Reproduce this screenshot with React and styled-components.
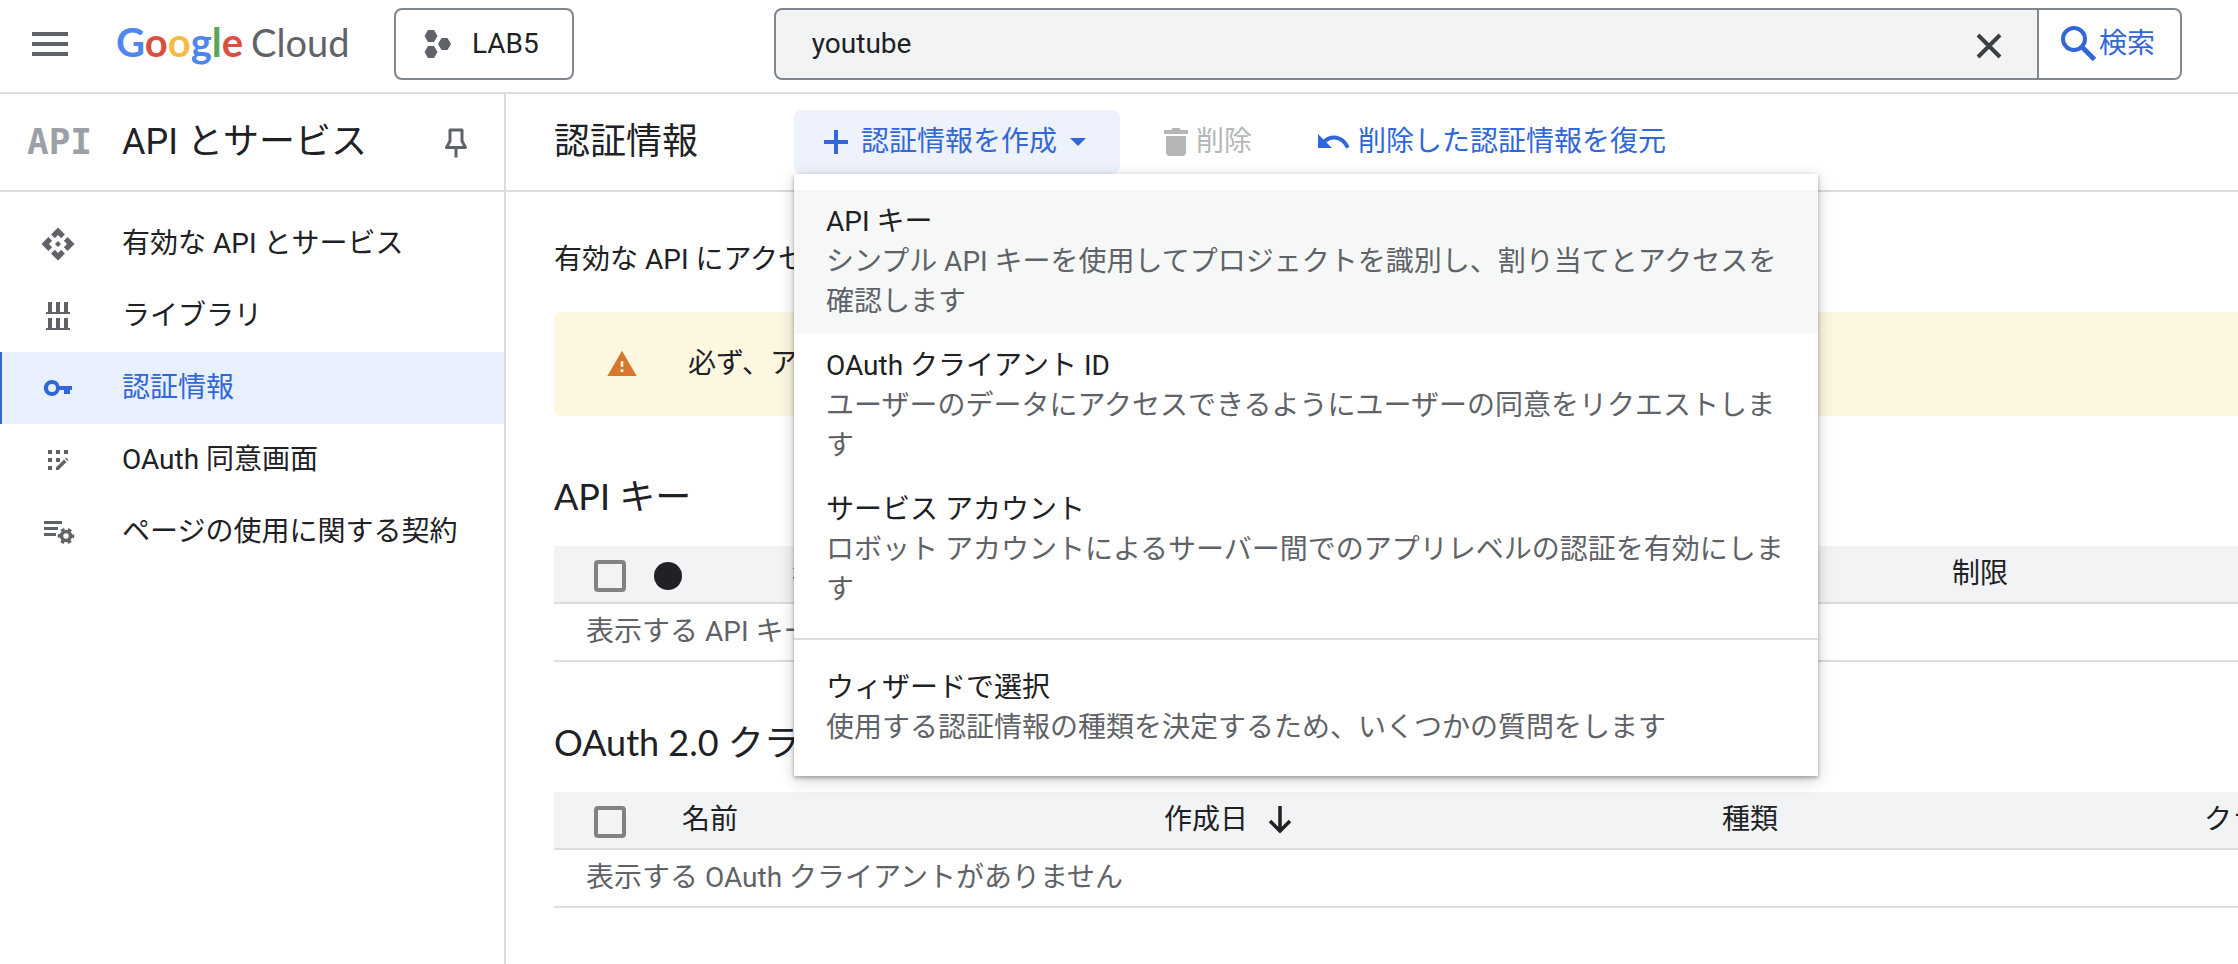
import React from "react";
import styled, { createGlobalStyle } from "styled-components";
import { MdApi, MdMenu, MdWarning } from "react-icons/md";

const GlobalStyles = createGlobalStyle`
  * {
    box-sizing: border-box;
  }
  body {
    margin: 0;
    background: #fff;
    color: #202124;
    font-family: Roboto, "Noto Sans CJK JP", sans-serif;
    font-size: 28px;
    line-height: 40px;
    overflow-x: hidden;
  }
  button,
  input {
    font: inherit;
    color: inherit;
    border: 0;
    margin: 0;
    padding: 0;
    background: none;
  }
  button {
    cursor: pointer;
  }
  svg {
    display: block;
    flex-shrink: 0;
  }
`;

const HeaderStyles = styled.header`
  display: flex;
  align-items: center;
  height: 94px;
  padding: 0 56px 4px 26px;
  border-bottom: 2px solid #dadce0;
`;

const MenuButton = styled.button`
  color: #5f6368;
`;

const Logo = styled.a`
  display: flex;
  align-items: baseline;
  column-gap: 8px;
  width: 278px;
  margin-left: 42px;
  padding-bottom: 4px;
  font-family: Lato, sans-serif;
  font-size: 38px;
  color: #5f6368;
  text-decoration: none;
  .logo-google {
    font-size: 40px;
    font-weight: 700;
  }
`;

const Letter = styled.span`
  color: ${(props) => props.$color};
`;

const ProjectButton = styled.button`
  display: flex;
  align-items: center;
  column-gap: 20px;
  height: 72px;
  padding: 0 33px 0 28px;
  border: 2px solid #80868b;
  border-radius: 8px;
`;

const SearchForm = styled.form`
  display: flex;
  flex: 1;
  height: 72px;
  margin-left: 200px;
  border: 2px solid #80868b;
  border-radius: 8px;
  background: #f1f3f4;
  overflow: hidden;
`;

const SearchInput = styled.input`
  flex: 1;
  min-width: 0;
  padding-left: 36px;
  outline: none;
`;

const ClearButton = styled.button`
  display: flex;
  align-items: center;
  justify-content: center;
  width: 96px;
  padding-top: 4px;
  color: #3c4043;
`;

const SearchButton = styled.button`
  display: flex;
  align-items: center;
  column-gap: 2px;
  padding: 0 25px 0 22px;
  border-left: 2px solid #80868b;
  background: #fff;
  color: #3367d6;
`;

const Layout = styled.div`
  display: grid;
  grid-template-columns: 506px minmax(0, 1fr);
  min-height: calc(100vh - 94px);
`;

const SidebarStyles = styled.aside`
  border-right: 2px solid #dadce0;
`;

const SidebarHeader = styled.div`
  display: flex;
  align-items: center;
  height: 98px;
  padding: 0 36px 0 27px;
  border-bottom: 2px solid #dadce0;
`;

const ApiMark = styled.span`
  width: 95px;
  font-family: "DejaVu Sans Mono", monospace;
  font-size: 36px;
  font-weight: 700;
  color: #9aa0a6;
`;

const Title = styled.h1`
  margin: 0;
  font-size: 36px;
  line-height: 48px;
  font-weight: 400;
  white-space: nowrap;
`;

const PinButton = styled.button`
  margin-left: auto;
  color: #5f6368;
`;

const Nav = styled.nav`
  padding-top: 16px;
`;

const NavLink = styled.a`
  display: flex;
  align-items: center;
  column-gap: 46px;
  height: 72px;
  padding-left: 40px;
  text-decoration: none;
  white-space: nowrap;
  color: ${(props) => (props.$active ? "#3367d6" : "#202124")};
  background: ${(props) => (props.$active ? "#e8f0fe" : "transparent")};
  box-shadow: ${(props) => (props.$active ? "inset 2px 0 #3367d6" : "none")};
  svg {
    color: ${(props) => (props.$active ? "#3367d6" : "#5f6368")};
  }
`;

const Toolbar = styled.div`
  display: flex;
  align-items: center;
  height: 98px;
  padding-left: 48px;
  border-bottom: 2px solid #dadce0;
`;

const CreateWrap = styled.div`
  position: relative;
  margin-left: 96px;
`;

const CreateButton = styled.button`
  display: flex;
  align-items: center;
  column-gap: 13px;
  height: 64px;
  padding: 0 34px 0 30px;
  border-radius: 8px;
  background: #edf2fc;
  color: #3367d6;
  white-space: nowrap;
`;

const ToolbarButton = styled.button`
  display: flex;
  align-items: center;
  column-gap: 8px;
  margin-left: ${(props) => props.$space};
  color: #2f66d9;
  white-space: nowrap;
  &:disabled {
    color: #b5b6b8;
  }
`;

const MenuStyles = styled.div`
  position: absolute;
  z-index: 2;
  top: 100%;
  left: 0;
  width: 1024px;
  background: #fff;
  box-shadow: 0 2px 4px rgba(0, 0, 0, 0.3), 0 4px 16px rgba(0, 0, 0, 0.18);
`;

const MenuGroup = styled.div`
  padding: 16px 0;
  & + & {
    border-top: 2px solid #dadce0;
  }
`;

const MenuItem = styled.button`
  display: block;
  width: 100%;
  padding: 12px 32px;
  text-align: left;
  background: ${(props) => (props.$hovered ? "#f6f8f8" : "#fff")};
  .item-title,
  .item-text {
    display: block;
  }
  .item-text {
    color: #5f6368;
  }
`;

const Content = styled.div`
  padding: 48px 0 56px 48px;
`;

const Intro = styled.p`
  margin: 0 0 32px;
  white-space: nowrap;
  overflow: hidden;
`;

const Banner = styled.div`
  display: flex;
  align-items: center;
  column-gap: 50px;
  height: 104px;
  padding-left: 52px;
  border-radius: 8px 0 0 8px;
  background: #fdf6e0;
  white-space: nowrap;
  overflow: hidden;
  svg {
    color: #d5782b;
  }
`;

const SectionTitle = styled.h2`
  margin: 56px 0 26px;
  font-family: Lato, "Noto Sans CJK JP", sans-serif;
  font-size: 36px;
  line-height: 48px;
  font-weight: 400;
`;

const Table = styled.table`
  width: 100%;
  table-layout: fixed;
  border-collapse: separate;
  border-spacing: 0;
  th,
  td {
    height: 58px;
    padding: 0;
    border-bottom: 2px solid #dadce0;
    text-align: left;
    font-weight: 400;
    white-space: nowrap;
    overflow: hidden;
  }
  th {
    background: #f1f3f4;
  }
  td {
    padding-left: 32px;
    color: #5f6368;
  }
`;

const Col = styled.col`
  width: ${(props) => props.$width || "auto"};
`;

const HeadCell = styled.div`
  display: flex;
  align-items: center;
  column-gap: 20px;
`;

const CheckCell = styled(HeadCell)`
  column-gap: 28px;
  padding: 4px 0 0 40px;
`;

const Checkbox = styled.input`
  appearance: none;
  width: 32px;
  height: 32px;
  border: 4px solid #808284;
  border-radius: 4px;
`;

const Dot = styled.span`
  width: 28px;
  height: 28px;
  border-radius: 50%;
  background: #202124;
`;

const IconProject = () => (
  <svg width="28" height="28" viewBox="0 0 28 28" fill="currentColor" color="#5f6368">
    <path d="M4 0h6l3.500 6-3.500 6H4L.5 6z" />
    <path d="M4 16h6l3.500 6-3.500 6H4L.5 22z" />
    <path d="M17.500 8h6l3.500 6-3.500 6h-6L14 14z" />
  </svg>
);

const IconClose = () => (
  <svg width="26" height="26" viewBox="0 0 26 26" fill="none" stroke="currentColor" strokeWidth="4">
    <path d="M2 2l22 22M24 2L2 24" />
  </svg>
);

const IconSearch = () => (
  <svg width="36" height="36" viewBox="0 0 36 36" fill="none" stroke="currentColor" strokeWidth="4">
    <circle cx="13" cy="13" r="11" />
    <path d="M21 21l12.500 12.500" strokeWidth="5" />
  </svg>
);

const IconPin = () => (
  <svg width="24" height="32" viewBox="0 0 24 32" fill="none" stroke="currentColor" strokeWidth="3">
    <path d="M6 4h12v11l3.500 6.500h-19L6 15z" strokeLinejoin="round" />
    <path d="M12 21v10.500" />
  </svg>
);

const IconLibrary = () => (
  <svg width="36" height="36" viewBox="0 0 36 36" fill="currentColor">
    <path d="M8 4h4v10h4V4h4v10h4V4h4v10h2v2H6v-2h2z" />
    <path d="M8 20h4v10h4V20h4v10h4V20h4v10h2v2H6v-2h2z" />
  </svg>
);

const IconKey = () => (
  <svg width="36" height="36" viewBox="0 0 36 36" fill="currentColor">
    <path
      fillRule="evenodd"
      d="M12 10a8 8 0 1 0 7.500 10H24v4h6v-4h2v-4H19.500A8 8 0 0 0 12 10zm0 4a4 4 0 1 1 0 8 4 4 0 0 1 0-8z"
    />
  </svg>
);

const IconConsent = () => (
  <svg width="36" height="36" viewBox="0 0 36 36" fill="currentColor">
    <path d="M8 8h4v4H8zM16 8h4v4h-4zM24 8h4v4h-4zM8 16h4v4H8zM16 16h4v4h-4zM8 24h4v4H8z" />
    <path d="M16 25.500l8-8 2.500 2.500-8 8H16zM25 16.500l1-1 2.500 2.500-1 1z" />
  </svg>
);

const IconAgreement = () => (
  <svg width="36" height="36" viewBox="0 0 36 36" fill="currentColor">
    <path d="M4 7h18v3H4zM4 13h14v3H4zM4 19h12v3H4z" />
    <g fill="none" stroke="currentColor">
      <circle cx="26" cy="22" r="4.500" strokeWidth="3.500" />
      <circle cx="26" cy="22" r="7" strokeWidth="2.500" strokeDasharray="3.700 3.630" strokeDashoffset="1.850" />
    </g>
  </svg>
);

const IconPlus = () => (
  <svg width="24" height="24" viewBox="0 0 24 24" fill="currentColor">
    <path d="M10 0h4v10h10v4H14v10h-4V14H0v-4h10z" />
  </svg>
);

const IconCaret = () => (
  <svg width="16" height="8" viewBox="0 0 16 8" fill="currentColor">
    <path d="M0 0h16L8 8z" />
  </svg>
);

const IconTrash = () => (
  <svg width="24" height="28" viewBox="0 0 24 28" fill="currentColor">
    <path d="M7 2l2-2h6l2 2h7v4H0V2zM2 8h20v16a4 4 0 0 1-4 4H6a4 4 0 0 1-4-4z" />
  </svg>
);

const IconUndo = () => (
  <svg width="32" height="16" viewBox="0 0 32 16" fill="currentColor">
    <path d="M0 0l5.500 5.500C8.500 3 12 1.500 16 1.500c7 0 13 5 15.500 11.500l-3.500 1.500C26 9.500 21.500 5.500 16 5.500c-3 0-5.500 1-7.500 3L14 14H0z" />
  </svg>
);

const IconArrowDown = () => (
  <svg width="24" height="28" viewBox="0 0 24 28" fill="none" stroke="currentColor" strokeWidth="3.500">
    <path d="M12 0v25M2 15l10 10 10-10" />
  </svg>
);

const googleLetters = [
  ["G", "#4e86ed"],
  ["o", "#da4f3e"],
  ["o", "#f2bd42"],
  ["g", "#4e86ed"],
  ["l", "#58a55c"],
  ["e", "#da4f3e"],
];

const navItems = [
  { label: "有効な API とサービス", icon: <MdApi size={36} /> },
  { label: "ライブラリ", icon: <IconLibrary /> },
  { label: "認証情報", icon: <IconKey />, active: true },
  { label: "OAuth 同意画面", icon: <IconConsent /> },
  { label: "ページの使用に関する契約", icon: <IconAgreement /> },
];

const createGroups = [
  [
    {
      title: "API キー",
      text: "シンプル API キーを使用してプロジェクトを識別し、割り当てとアクセスを確認します",
      hovered: true,
    },
    {
      title: "OAuth クライアント ID",
      text: "ユーザーのデータにアクセスできるようにユーザーの同意をリクエストします",
    },
    {
      title: "サービス アカウント",
      text: "ロボット アカウントによるサーバー間でのアプリレベルの認証を有効にします",
    },
  ],
  [
    {
      title: "ウィザードで選択",
      text: "使用する認証情報の種類を決定するため、いくつかの質問をします",
    },
  ],
];

const Header = () => (
  <HeaderStyles>
    <MenuButton type="button" aria-label="メニュー">
      <MdMenu size={48} />
    </MenuButton>
    <Logo href="#">
      <span className="logo-google">
        {googleLetters.map(([letter, color], index) => (
          <Letter key={index} $color={color}>
            {letter}
          </Letter>
        ))}
      </span>
      <span>Cloud</span>
    </Logo>
    <ProjectButton type="button">
      <IconProject />
      LAB5
    </ProjectButton>
    <SearchForm onSubmit={(e) => e.preventDefault()}>
      <SearchInput type="text" aria-label="検索" defaultValue="youtube" />
      <ClearButton type="reset" aria-label="クリア">
        <IconClose />
      </ClearButton>
      <SearchButton type="submit">
        <IconSearch />
        検索
      </SearchButton>
    </SearchForm>
  </HeaderStyles>
);

const Sidebar = () => (
  <SidebarStyles>
    <SidebarHeader>
      <ApiMark aria-hidden="true">API</ApiMark>
      <Title as="div">API とサービス</Title>
      <PinButton type="button" aria-label="固定">
        <IconPin />
      </PinButton>
    </SidebarHeader>
    <Nav>
      {navItems.map((item) => (
        <NavLink key={item.label} href="#" $active={item.active}>
          {item.icon}
          {item.label}
        </NavLink>
      ))}
    </Nav>
  </SidebarStyles>
);

const CreateMenu = () => (
  <MenuStyles role="menu">
    {createGroups.map((group, index) => (
      <MenuGroup key={index}>
        {group.map((item) => (
          <MenuItem key={item.title} type="button" role="menuitem" $hovered={item.hovered}>
            <span className="item-title">{item.title}</span>
            <span className="item-text">{item.text}</span>
          </MenuItem>
        ))}
      </MenuGroup>
    ))}
  </MenuStyles>
);

const CredentialTable = ({ columns, empty, checkWidth, dot, label }) => (
  <Table>
    <colgroup>
      <Col $width={checkWidth} />
      {columns.map((column) => (
        <Col key={column.label} $width={column.width} />
      ))}
    </colgroup>
    <thead>
      <tr>
        <th>
          <CheckCell>
            <Checkbox type="checkbox" aria-label={label} />
            {dot && <Dot />}
          </CheckCell>
        </th>
        {columns.map((column) => (
          <th key={column.label}>
            <HeadCell>
              {column.label}
              {column.sorted && <IconArrowDown />}
            </HeadCell>
          </th>
        ))}
      </tr>
    </thead>
    <tbody>
      <tr>
        <td colSpan={columns.length + 1}>{empty}</td>
      </tr>
    </tbody>
  </Table>
);

const App = () => (
  <>
    <GlobalStyles />
    <Header />
    <Layout>
      <Sidebar />
      <main>
        <Toolbar>
          <Title>認証情報</Title>
          <CreateWrap>
            <CreateButton type="button" aria-haspopup="menu" aria-expanded="true">
              <IconPlus />
              認証情報を作成
              <IconCaret />
            </CreateButton>
            <CreateMenu />
          </CreateWrap>
          <ToolbarButton type="button" disabled $space="44px">
            <IconTrash />
            削除
          </ToolbarButton>
          <ToolbarButton type="button" $space="66px">
            <IconUndo />
            削除した認証情報を復元
          </ToolbarButton>
        </Toolbar>
        <Content>
          <Intro>有効な API にアクセスするための認証情報を作成します</Intro>
          <Banner>
            <MdWarning size={32} />
            必ず、アプリケーションに関する情報を使用して
          </Banner>
          <SectionTitle>API キー</SectionTitle>
          <CredentialTable
            label="API キーをすべて選択"
            dot
            checkWidth="238px"
            columns={[
              { label: "名前", width: "480px" },
              { label: "作成日", width: "680px", sorted: true },
              { label: "制限" },
            ]}
            empty="表示する API キーがありません"
          />
          <SectionTitle>OAuth 2.0 クライアント ID</SectionTitle>
          <CredentialTable
            label="クライアントをすべて選択"
            checkWidth="128px"
            columns={[
              { label: "名前", width: "482px" },
              { label: "作成日", width: "558px", sorted: true },
              { label: "種類", width: "482px" },
              { label: "クライアント ID" },
            ]}
            empty="表示する OAuth クライアントがありません"
          />
        </Content>
      </main>
    </Layout>
  </>
);

export default App;
